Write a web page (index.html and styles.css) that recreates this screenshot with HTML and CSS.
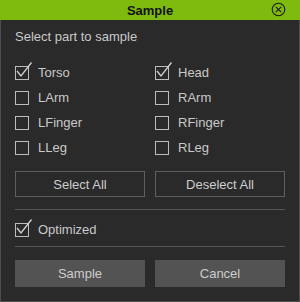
FILE: index.html
```html
<!DOCTYPE html>
<html lang="en">
  <head>
    <meta charset="utf-8" />
    <title>Sample</title>
    <link rel="stylesheet" href="styles.css">
  </head>
  <body>
    <div class="window">
      <div class="titlebar">
        <span class="title">Sample</span>
        <svg class="close" width="15" height="15" viewBox="0 0 15 15">
          <circle cx="7.5" cy="7.5" r="6.3" fill="none" stroke="#1a1a1a" stroke-width="1.1" />
          <path d="M4.8 4.8 L10.2 10.2 M10.2 4.8 L4.8 10.2" stroke="#1a1a1a" stroke-width="1.1" />
        </svg>
      </div>

      <div class="panel">
        <div class="heading">Select part to sample</div>

        <div class="parts">
          <label class="check"><span class="box"><svg class="tick" width="20" height="18" viewBox="0 0 20 18"><path d="M2 9 L6 14 L16.5 0.5" fill="none" stroke="#d2d2d2" stroke-width="1.3" /></svg></span>Torso</label>
          <label class="check"><span class="box"><svg class="tick" width="20" height="18" viewBox="0 0 20 18"><path d="M2 9 L6 14 L16.5 0.5" fill="none" stroke="#d2d2d2" stroke-width="1.3" /></svg></span>Head</label>
          <label class="check"><span class="box"></span>LArm</label>
          <label class="check"><span class="box"></span>RArm</label>
          <label class="check"><span class="box"></span>LFinger</label>
          <label class="check"><span class="box"></span>RFinger</label>
          <label class="check"><span class="box"></span>LLeg</label>
          <label class="check"><span class="box"></span>RLeg</label>
        </div>

        <div class="pair outline">
          <button class="btn">Select All</button>
          <button class="btn">Deselect All</button>
        </div>

        <hr class="sep first">

        <label class="check optimized"><span class="box"><svg class="tick" width="20" height="18" viewBox="0 0 20 18"><path d="M2 9 L6 14 L16.5 0.5" fill="none" stroke="#d2d2d2" stroke-width="1.3" /></svg></span>Optimized</label>

        <hr class="sep">

        <div class="pair solid">
          <button class="btn">Sample</button>
          <button class="btn">Cancel</button>
        </div>
      </div>
    </div>
  </body>
</html>
```

FILE: styles.css
```css
html, body {
  margin: 0;
  padding: 0;
  background: #2a2a2a;
}
body {
  font-family: "Liberation Sans", Arial, sans-serif;
  font-size: 13px;
  color: #c9c9c9;
}
.window {
  width: 300px;
  height: 302px;
  display: flex;
  flex-direction: column;
}
.titlebar {
  height: 20px;
  background: #7fba0f;
  display: flex;
  align-items: center;
  justify-content: center;
  position: relative;
}
.title {
  font-weight: bold;
  font-size: 13px;
  color: #111;
}
.close {
  position: absolute;
  left: 271px;
  top: 2px;
}
.panel {
  flex: 1;
  background: #2a2a2a;
  border: 1px solid #4e4e4e;
  border-top: none;
  padding: 9px 14px 0;
}
.heading {
  line-height: 16px;
}
.parts {
  margin-top: 15px;
  display: grid;
  grid-template-columns: 130px 130px;
  column-gap: 10px;
  grid-auto-rows: 25px;
}
.check {
  display: flex;
  align-items: center;
  gap: 9px;
}
.box {
  position: relative;
  width: 14px;
  height: 14px;
  box-sizing: border-box;
  border: 1px solid #bdbdbd;
}
.tick {
  position: absolute;
  left: -1px;
  top: -5px;
}
.pair {
  display: flex;
  gap: 10px;
}
.btn {
  width: 130px;
  font: inherit;
  color: #cdcdcd;
  padding: 0;
}
.pair.outline {
  margin-top: 11px;
}
.outline .btn {
  height: 26px;
  background: #2a2a2a;
  border: 1px solid #5e5e5e;
}
.solid .btn {
  height: 27px;
  background: #535353;
  border: none;
}
.pair.solid {
  margin-top: 13px;
}
.sep {
  border: none;
  height: 1px;
  background: #565656;
  margin: 4px 0 0;
}
.sep.first {
  margin-top: 12px;
}
.optimized {
  margin-top: 7px;
  height: 25px;
}
```
